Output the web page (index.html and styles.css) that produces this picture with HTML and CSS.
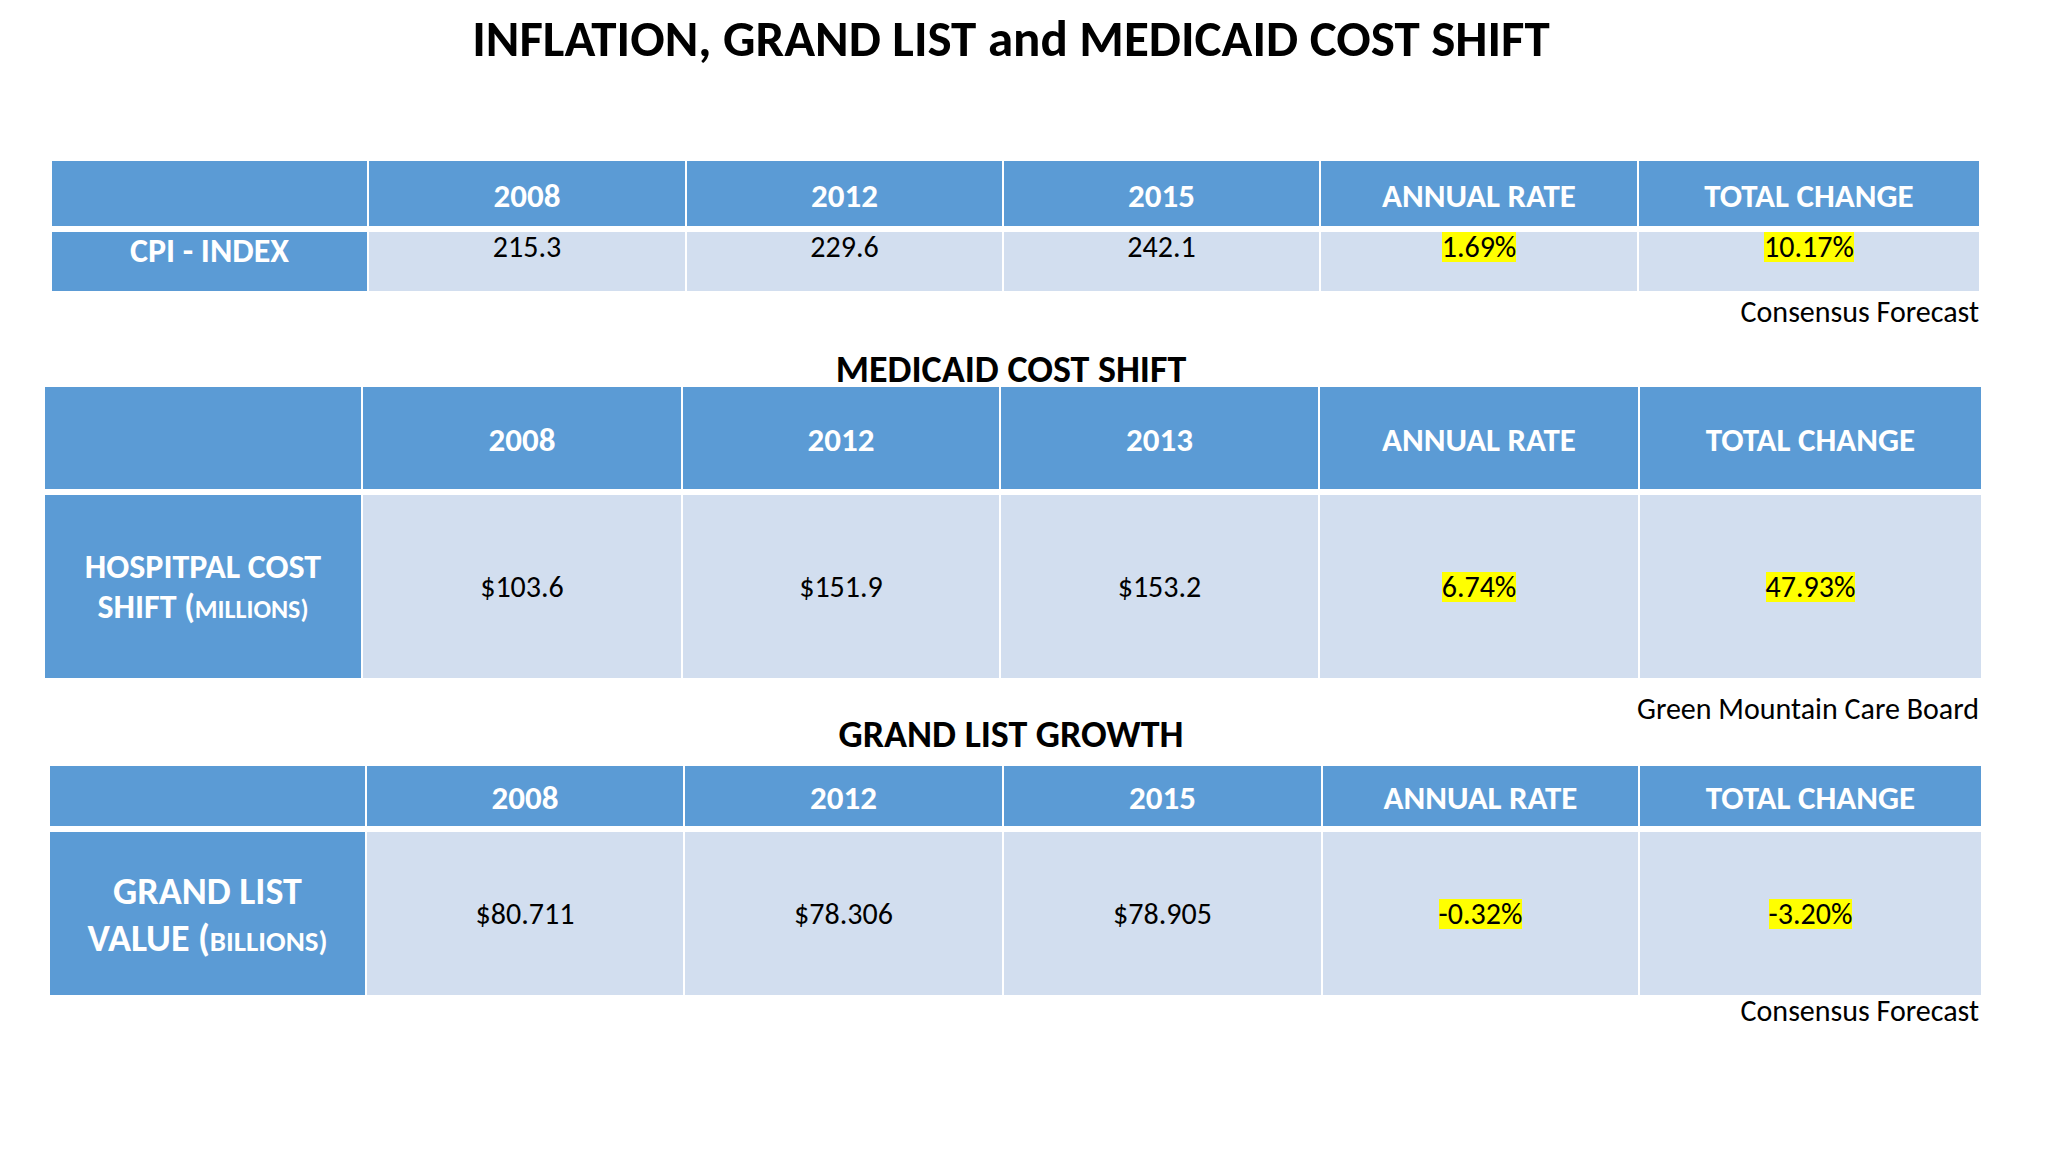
FILE: index.html
```html
<!DOCTYPE html>
<html lang="en">
<head>
<meta charset="utf-8">
<title>Inflation, Grand List and Medicaid Cost Shift</title>
<link rel="stylesheet" href="styles.css">
</head>
<body>
<div class="slide">
  <h1 class="title">INFLATION, GRAND LIST and MEDICAID COST SHIFT</h1>

  <div class="grid t1">
    <div class="hd"></div>
    <div class="hd">2008</div>
    <div class="hd">2012</div>
    <div class="hd">2015</div>
    <div class="hd">ANNUAL RATE</div>
    <div class="hd">TOTAL CHANGE</div>
    <div class="lbl lbl-top"><span>CPI - INDEX</span></div>
    <div class="cell cell-top">215.3</div>
    <div class="cell cell-top">229.6</div>
    <div class="cell cell-top">242.1</div>
    <div class="cell cell-top"><span class="hl">1.69%</span></div>
    <div class="cell cell-top"><span class="hl">10.17%</span></div>
  </div>
  <p class="src s1">Consensus Forecast</p>

  <h2 class="sub sub-a">MEDICAID COST SHIFT</h2>
  <div class="grid t2">
    <div class="hd"></div>
    <div class="hd">2008</div>
    <div class="hd">2012</div>
    <div class="hd">2013</div>
    <div class="hd">ANNUAL RATE</div>
    <div class="hd">TOTAL CHANGE</div>
    <div class="lbl lbl-m"><span>HOSPITPAL COST<br>SHIFT (<span class="sc-m">MILLIONS)</span></span></div>
    <div class="cell">$103.6</div>
    <div class="cell">$151.9</div>
    <div class="cell">$153.2</div>
    <div class="cell"><span class="hl">6.74%</span></div>
    <div class="cell"><span class="hl">47.93%</span></div>
  </div>
  <p class="src s2">Green Mountain Care Board</p>

  <h2 class="sub sub-b">GRAND LIST GROWTH</h2>
  <div class="grid t3">
    <div class="hd"></div>
    <div class="hd">2008</div>
    <div class="hd">2012</div>
    <div class="hd">2015</div>
    <div class="hd">ANNUAL RATE</div>
    <div class="hd">TOTAL CHANGE</div>
    <div class="lbl lbl-g"><span>GRAND LIST<br>VALUE (<span class="sc-b">BILLIONS)</span></span></div>
    <div class="cell">$80.711</div>
    <div class="cell">$78.306</div>
    <div class="cell">$78.905</div>
    <div class="cell"><span class="hl">-0.32%</span></div>
    <div class="cell"><span class="hl">-3.20%</span></div>
  </div>
  <p class="src s3">Consensus Forecast</p>
</div>
</body>
</html>
```

FILE: styles.css
```css
* { box-sizing: border-box; }

html, body {
  margin: 0;
  padding: 0;
  background: #ffffff;
}

.slide {
  width: 2048px;
  height: 1152px;
  overflow: hidden;
  display: flex;
  flex-direction: column;
  font-family: Carlito, Lato, "Liberation Sans", sans-serif;
  color: #000000;
  background: #ffffff;
}

.title {
  margin: 15px 0 0 0;
  padding-right: 26px;
  font-size: 51px;
  line-height: 48px;
  height: 48px;
  font-weight: 700;
  text-align: center;
}

.grid {
  display: grid;
  column-gap: 2px;
  row-gap: 6px;
  background: #ffffff;
}

.t1 {
  margin: 98px 0 0 52px;
  width: 1927px;
  grid-template-columns: 315px 316px 315px 315px 316px 340px;
  grid-template-rows: 65px 59px;
}

.t2 {
  margin: 5px 0 0 45px;
  width: 1936px;
  grid-template-columns: 316px 318px 316px 317px 318px 341px;
  grid-template-rows: 102px 183px;
}

.t3 {
  margin: 19px 0 0 50px;
  width: 1931px;
  grid-template-columns: 315px 316px 317px 317px 315px 341px;
  grid-template-rows: 60px 163px;
}

.hd {
  background: #5b9bd5;
  color: #ffffff;
  font-weight: 700;
  font-size: 33px;
  line-height: 33px;
  display: flex;
  align-items: center;
  justify-content: center;
  padding-top: 5px;
  text-align: center;
}

.lbl {
  background: #5b9bd5;
  color: #ffffff;
  font-weight: 700;
  text-align: center;
  display: flex;
  justify-content: center;
}

.lbl-top {
  font-size: 34px;
  line-height: 34px;
  padding-top: 2px;
  align-items: flex-start;
}

.lbl-m {
  font-size: 34px;
  line-height: 40px;
  align-items: center;
  padding-top: 2px;
}

.lbl-g {
  font-size: 38px;
  line-height: 47px;
  align-items: center;
  padding-top: 6px;
}

.sc-m { font-size: 26px; }
.sc-b { font-size: 29px; }

.cell {
  background: #d2deef;
  font-size: 30px;
  line-height: 30px;
  display: flex;
  align-items: center;
  justify-content: center;
}

.cell-top {
  align-items: flex-start;
}

.hl {
  background: #ffff00;
}

.src {
  margin: 0;
  font-size: 30px;
  line-height: 24px;
  height: 24px;
  text-align: right;
  padding-right: 69px;
}

.s1 { margin-top: 9px; }
.s2 { margin-top: 19px; }
.s3 { margin-top: 4px; }

.sub {
  margin: 0;
  padding-right: 26px;
  font-size: 38px;
  line-height: 26px;
  height: 26px;
  font-weight: 700;
  text-align: center;
}

.sub-a { margin-top: 32px; }
.sub-b { margin-top: 0; }
```
